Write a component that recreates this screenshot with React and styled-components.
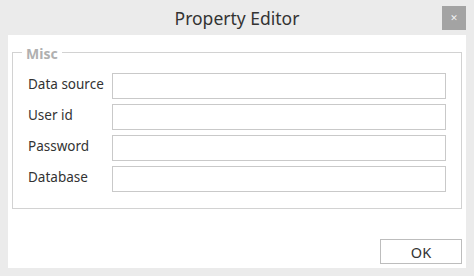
import { Fragment } from 'react';
import styled, { createGlobalStyle } from 'styled-components';

const GlobalStyle = createGlobalStyle`
  html, body {
    margin: 0;
    padding: 0;
    background: #ebebeb;
  }
  body {
    font-family: "Noto Sans", "Open Sans", sans-serif;
    color: #333;
  }
`;

const Window = styled.div`
  width: 474px;
  height: 276px;
  display: flex;
  flex-direction: column;
  background: #ebebeb;
  box-sizing: border-box;
`;

const TitleBar = styled.div`
  height: 35px;
  display: grid;
  grid-template-columns: 1fr auto 1fr;
  align-items: center;
  padding: 0 8px;
  box-sizing: border-box;
`;

const Title = styled.div`
  grid-column: 2;
  font-size: 17.5px;
  color: #333;
  padding-top: 1px;
`;

const CloseButton = styled.button`
  grid-column: 3;
  justify-self: end;
  width: 24px;
  height: 24px;
  border: none;
  padding: 0;
  background: #a3a3a3;
  color: #f2f2f2;
  font-size: 9px;
  font-weight: bold;
  font-family: "DejaVu Sans", sans-serif;
  display: flex;
  align-items: center;
  justify-content: center;
  margin-top: 1px;
`;

const Body = styled.div`
  margin: 0 8px;
  height: 233px;
  background: #fff;
  display: flex;
  flex-direction: column;
  padding: 9px 4px 4px;
  box-sizing: border-box;
`;

const GroupBox = styled.fieldset`
  margin: 0;
  padding: 13px 15px 16px;
  border: 1px solid #d2d2d2;
  min-width: 0;
`;

const Legend = styled.legend`
  margin-left: -6px;
  padding: 0 4px;
  font-size: 14px;
  line-height: 16px;
  font-weight: bold;
  color: #b0b0b0;
  transform: translateY(2px);
`;

const Fields = styled.div`
  display: grid;
  grid-template-columns: 84px 1fr;
  row-gap: 5px;
  align-items: center;
`;

const Label = styled.label`
  font-size: 13.5px;
  color: #333;
  white-space: nowrap;
  padding-bottom: 4px;
`;

const Input = styled.input`
  height: 26px;
  box-sizing: border-box;
  border: 1px solid #c9c9c9;
  background: #fff;
  margin: 0;
  padding: 0 4px;
  font: inherit;
  outline: none;
`;

const Footer = styled.div`
  margin-top: auto;
  display: flex;
  justify-content: flex-end;
`;

const Button = styled.button`
  width: 82px;
  height: 25px;
  box-sizing: border-box;
  border: 1px solid #bdbdbd;
  background: #fff;
  font-family: inherit;
  font-size: 14.5px;
  color: #333;
  padding: 0;
`;

const fields = ['Data source', 'User id', 'Password', 'Database'];

export default function App() {
  return (
    <>
      <GlobalStyle />
      <Window>
        <TitleBar>
          <Title>Property Editor</Title>
          <CloseButton>✕</CloseButton>
        </TitleBar>
        <Body>
          <GroupBox>
            <Legend>Misc</Legend>
            <Fields>
              {fields.map((f) => (
                <Fragment key={f}>
                  <Label>{f}</Label>
                  <Input type={f === 'Password' ? 'password' : 'text'} />
                </Fragment>
              ))}
            </Fields>
          </GroupBox>
          <Footer>
            <Button>OK</Button>
          </Footer>
        </Body>
      </Window>
    </>
  );
}
